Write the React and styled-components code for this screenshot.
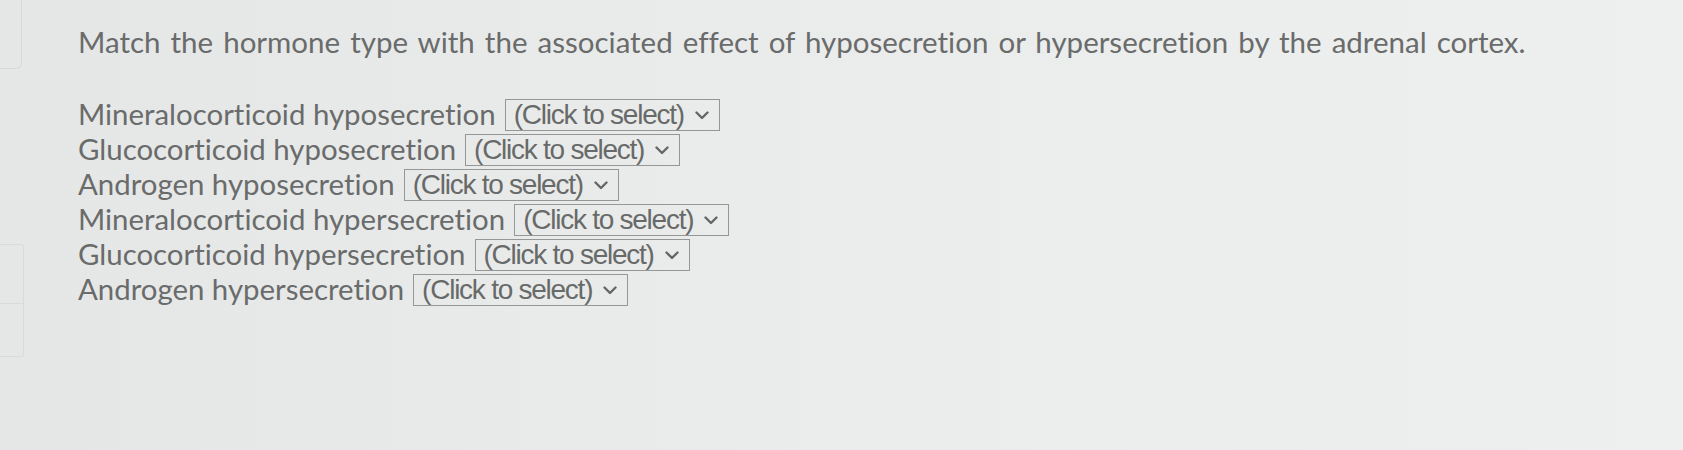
import styled, { createGlobalStyle } from "styled-components";

const GlobalStyle = createGlobalStyle`
  html, body {
    margin: 0;
    padding: 0;
  }
  body {
    background: linear-gradient(90deg, #e5e7e6 0%, #eaeceb 45%, #eef0ef 100%);
  }
`;

const Page = styled.div`
  display: flex;
  height: 450px;
  overflow: hidden;
`;

const Rail = styled.div`
  width: 24px;
  display: flex;
  flex-direction: column;
  flex-shrink: 0;
`;

const TopTab = styled.div`
  width: 21px;
  height: 68px;
  border: 1px solid #d7d9d8;
  border-top: none;
  border-left: none;
  border-bottom-right-radius: 6px;
`;

const SideTabs = styled.div`
  margin-top: 175px;
  width: 23px;
  border: 1px solid #d9dbda;
  border-left: none;
  border-radius: 0 3px 3px 0;
  display: flex;
  flex-direction: column;
`;

const SideCell = styled.div`
  height: ${(p) => p.h}px;
  & + & {
    border-top: 1px solid #d9dbda;
  }
`;

const Content = styled.div`
  padding: 22px 0 0 54px;
  font-family: Lato, "Open Sans", sans-serif;
  font-variant-ligatures: none;
  color: #6a6b6b;
`;

const Prompt = styled.p`
  margin: 0 0 37px;
  font-size: 29.5px;
  word-spacing: 2.5px;
  line-height: 40px;
`;

const List = styled.div`
  display: flex;
  flex-direction: column;
  gap: 3px;
`;

const Row = styled.div`
  display: flex;
  align-items: center;
  gap: 9px;
  height: 32px;
  font-size: 29.4px;
`;

const Label = styled.span`
  line-height: 32px;
  padding-bottom: 3px;
`;

const Select = styled.button`
  display: inline-flex;
  align-items: center;
  gap: 11px;
  height: 32px;
  box-sizing: border-box;
  padding: 0 10px 0 8px;
  background: transparent;
  border: 1.5px solid #959796;
  border-radius: 0;
  font-family: "Liberation Sans", Arial, sans-serif;
  font-size: 28px;
  letter-spacing: -1.25px;
  color: #686a69;
  cursor: pointer;
`;

const Chevron = () => (
  <svg width="14" height="9" viewBox="0 0 14 9" fill="none">
    <polyline
      points="1.5,1.5 7,7 12.5,1.5"
      stroke="#656766"
      strokeWidth="2.4"
      strokeLinecap="round"
      strokeLinejoin="round"
    />
  </svg>
);

const items = [
  "Mineralocorticoid hyposecretion",
  "Glucocorticoid hyposecretion",
  "Androgen hyposecretion",
  "Mineralocorticoid hypersecretion",
  "Glucocorticoid hypersecretion",
  "Androgen hypersecretion",
];

export default function App() {
  return (
    <>
      <GlobalStyle />
      <Page>
        <Rail>
          <TopTab />
          <SideTabs>
            <SideCell h={58} />
            <SideCell h={52} />
          </SideTabs>
        </Rail>
        <Content>
          <Prompt>
            Match the hormone type with the associated effect of hyposecretion
            or hypersecretion by the adrenal cortex.
          </Prompt>
          <List>
            {items.map((label) => (
              <Row key={label}>
                <Label>{label}</Label>
                <Select type="button">
                  (Click to select)
                  <Chevron />
                </Select>
              </Row>
            ))}
          </List>
        </Content>
      </Page>
    </>
  );
}
